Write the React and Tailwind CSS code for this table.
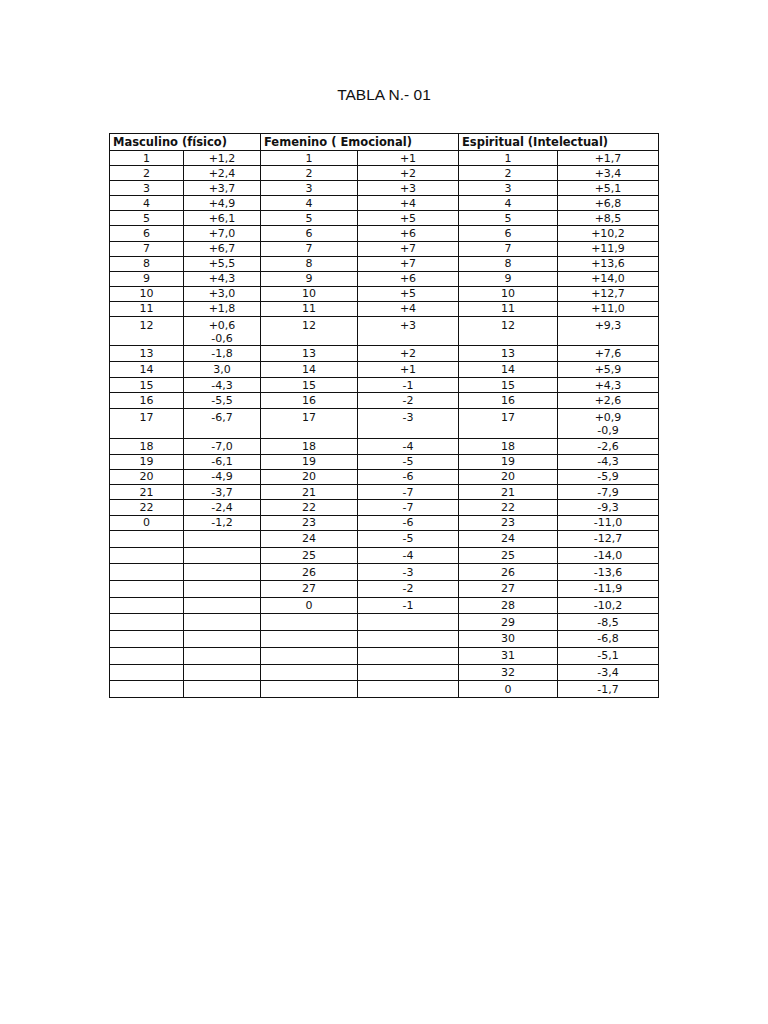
const masculino = [
  ["1", "+1,2"], ["2", "+2,4"], ["3", "+3,7"], ["4", "+4,9"], ["5", "+6,1"],
  ["6", "+7,0"], ["7", "+6,7"], ["8", "+5,5"], ["9", "+4,3"], ["10", "+3,0"],
  ["11", "+1,8"], ["12", "+0,6\n-0,6"], ["13", "-1,8"], ["14", "3,0"], ["15", "-4,3"],
  ["16", "-5,5"], ["17", "-6,7"], ["18", "-7,0"], ["19", "-6,1"], ["20", "-4,9"],
  ["21", "-3,7"], ["22", "-2,4"], ["0", "-1,2"],
];

const femenino = [
  ["1", "+1"], ["2", "+2"], ["3", "+3"], ["4", "+4"], ["5", "+5"],
  ["6", "+6"], ["7", "+7"], ["8", "+7"], ["9", "+6"], ["10", "+5"],
  ["11", "+4"], ["12", "+3"], ["13", "+2"], ["14", "+1"], ["15", "-1"],
  ["16", "-2"], ["17", "-3"], ["18", "-4"], ["19", "-5"], ["20", "-6"],
  ["21", "-7"], ["22", "-7"], ["23", "-6"], ["24", "-5"], ["25", "-4"],
  ["26", "-3"], ["27", "-2"], ["0", "-1"],
];

const espiritual = [
  ["1", "+1,7"], ["2", "+3,4"], ["3", "+5,1"], ["4", "+6,8"], ["5", "+8,5"],
  ["6", "+10,2"], ["7", "+11,9"], ["8", "+13,6"], ["9", "+14,0"], ["10", "+12,7"],
  ["11", "+11,0"], ["12", "+9,3"], ["13", "+7,6"], ["14", "+5,9"], ["15", "+4,3"],
  ["16", "+2,6"], ["17", "+0,9\n-0,9"], ["18", "-2,6"], ["19", "-4,3"], ["20", "-5,9"],
  ["21", "-7,9"], ["22", "-9,3"], ["23", "-11,0"], ["24", "-12,7"], ["25", "-14,0"],
  ["26", "-13,6"], ["27", "-11,9"], ["28", "-10,2"], ["29", "-8,5"], ["30", "-6,8"],
  ["31", "-5,1"], ["32", "-3,4"], ["0", "-1,7"],
];

// the scanned rows are not all the same height
function rowClass(i) {
  if (i === 11) return "h-[28px]";
  if (i === 16) return "h-[30px]";
  if (i < 11) return "h-[15.1px]";
  if (i < 16) return "h-[15.8px]";
  if (i < 23) return "h-[15.3px]";
  return "h-[16.7px]";
}

const cell = "border border-[#111] p-0 text-center whitespace-pre-line";
const head = "border border-[#111] px-[3px] py-0 text-left text-[11.5px] font-bold";

export default function App() {
  const rows = Array.from({ length: 33 }, (_, i) => i);

  return (
    <div className="min-h-[1024px] w-[768px] bg-white text-[#111]">
      <div
        className="pt-[86px] text-center text-[15.5px] leading-[18px]"
        style={{ fontFamily: '"Liberation Sans", Arial, sans-serif' }}
      >
        TABLA N.- 01
      </div>

      <table
        className="mx-auto mt-[29px] w-[549px] table-fixed border-collapse text-[11px] leading-[13px]"
        style={{ fontFamily: '"DejaVu Sans", Verdana, sans-serif' }}
      >
        <colgroup>
          <col className="w-[74px]" />
          <col className="w-[77px]" />
          <col className="w-[97px]" />
          <col className="w-[101px]" />
          <col className="w-[99px]" />
          <col className="w-[101px]" />
        </colgroup>
        <thead>
          <tr className="h-[17px]">
            <th colSpan={2} className={head}>
              Masculino (físico)
            </th>
            <th colSpan={2} className={head}>
              Femenino ( Emocional)
            </th>
            <th colSpan={2} className={head}>
              Espiritual (Intelectual)
            </th>
          </tr>
        </thead>
        <tbody>
          {rows.map((i) => {
            const tall = i === 11 || i === 16;
            const align = tall ? "align-top pt-[2px]" : "align-middle";
            const m = masculino[i] || ["", ""];
            const f = femenino[i] || ["", ""];
            const e = espiritual[i] || ["", ""];
            return (
              <tr key={i} className={rowClass(i)}>
                <td className={`${cell} ${align}`}>{m[0]}</td>
                <td className={`${cell} ${align}`}>{m[1]}</td>
                <td className={`${cell} ${align}`}>{f[0]}</td>
                <td className={`${cell} ${align}`}>{f[1]}</td>
                <td className={`${cell} ${align}`}>{e[0]}</td>
                <td className={`${cell} ${align}`}>{e[1]}</td>
              </tr>
            );
          })}
        </tbody>
      </table>
    </div>
  );
}
